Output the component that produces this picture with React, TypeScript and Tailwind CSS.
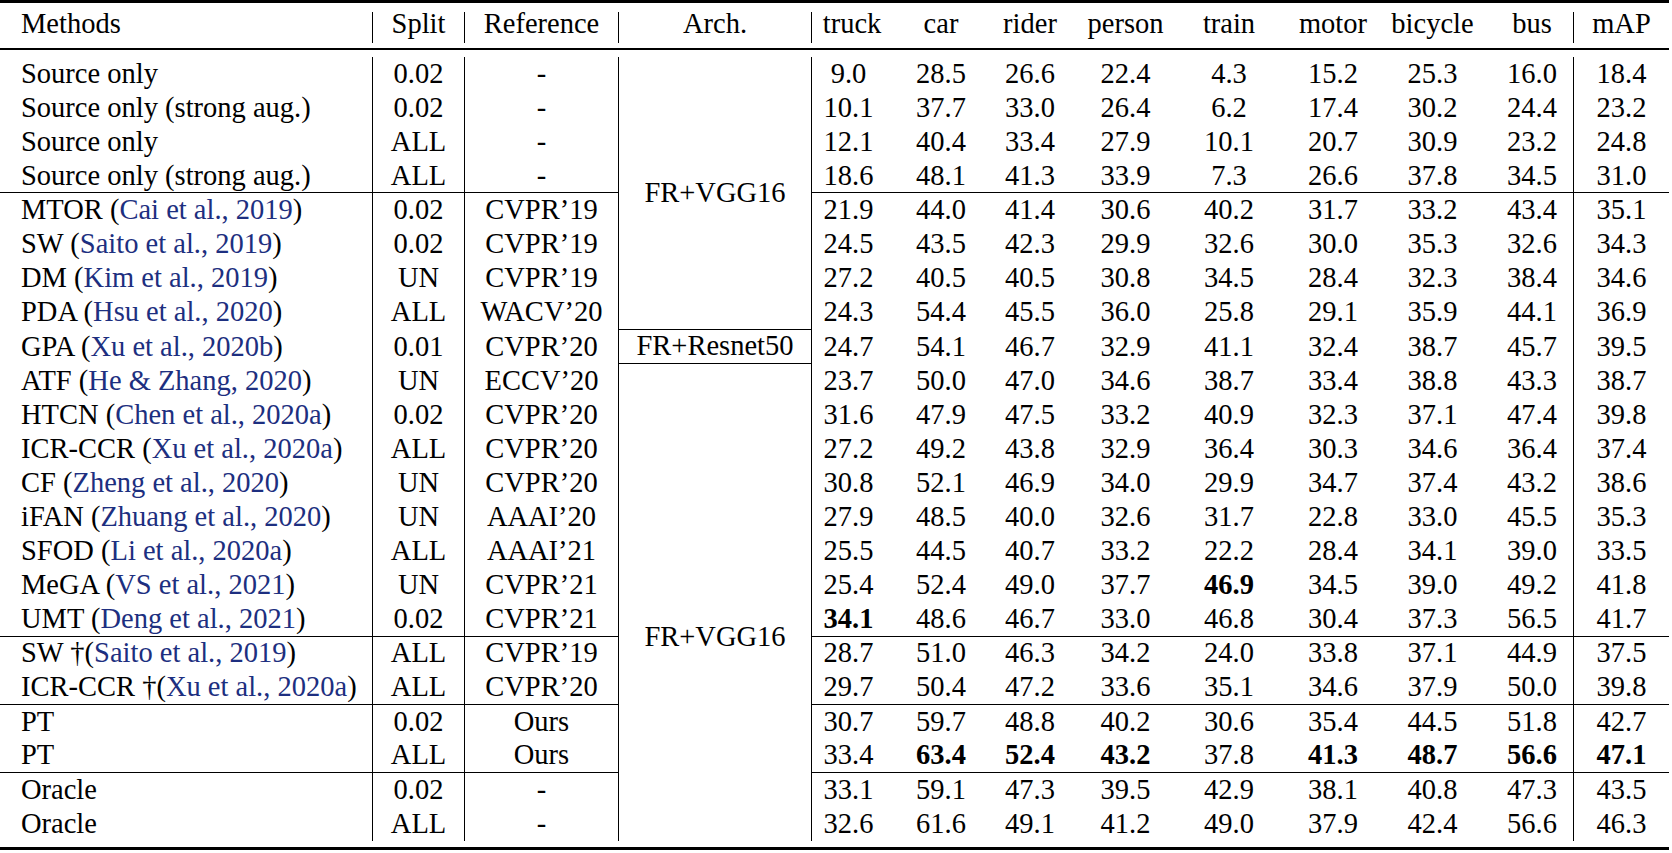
import React from "react";

type Row = {
  name: string;
  cite?: string;
  split: string;
  ref: string;
  vals: string[];
  bold?: number[];
  line?: boolean;
};

const rows: Row[] = [
  { name: "Source only", split: "0.02", ref: "-", vals: ["9.0", "28.5", "26.6", "22.4", "4.3", "15.2", "25.3", "16.0", "18.4"] },
  { name: "Source only (strong aug.)", split: "0.02", ref: "-", vals: ["10.1", "37.7", "33.0", "26.4", "6.2", "17.4", "30.2", "24.4", "23.2"] },
  { name: "Source only", split: "ALL", ref: "-", vals: ["12.1", "40.4", "33.4", "27.9", "10.1", "20.7", "30.9", "23.2", "24.8"] },
  { name: "Source only (strong aug.)", split: "ALL", ref: "-", vals: ["18.6", "48.1", "41.3", "33.9", "7.3", "26.6", "37.8", "34.5", "31.0"], line: true },
  { name: "MTOR (", cite: "Cai et al., 2019", split: "0.02", ref: "CVPR’19", vals: ["21.9", "44.0", "41.4", "30.6", "40.2", "31.7", "33.2", "43.4", "35.1"] },
  { name: "SW (", cite: "Saito et al., 2019", split: "0.02", ref: "CVPR’19", vals: ["24.5", "43.5", "42.3", "29.9", "32.6", "30.0", "35.3", "32.6", "34.3"] },
  { name: "DM (", cite: "Kim et al., 2019", split: "UN", ref: "CVPR’19", vals: ["27.2", "40.5", "40.5", "30.8", "34.5", "28.4", "32.3", "38.4", "34.6"] },
  { name: "PDA (", cite: "Hsu et al., 2020", split: "ALL", ref: "WACV’20", vals: ["24.3", "54.4", "45.5", "36.0", "25.8", "29.1", "35.9", "44.1", "36.9"] },
  { name: "GPA (", cite: "Xu et al., 2020b", split: "0.01", ref: "CVPR’20", vals: ["24.7", "54.1", "46.7", "32.9", "41.1", "32.4", "38.7", "45.7", "39.5"] },
  { name: "ATF (", cite: "He & Zhang, 2020", split: "UN", ref: "ECCV’20", vals: ["23.7", "50.0", "47.0", "34.6", "38.7", "33.4", "38.8", "43.3", "38.7"] },
  { name: "HTCN (", cite: "Chen et al., 2020a", split: "0.02", ref: "CVPR’20", vals: ["31.6", "47.9", "47.5", "33.2", "40.9", "32.3", "37.1", "47.4", "39.8"] },
  { name: "ICR-CCR (", cite: "Xu et al., 2020a", split: "ALL", ref: "CVPR’20", vals: ["27.2", "49.2", "43.8", "32.9", "36.4", "30.3", "34.6", "36.4", "37.4"] },
  { name: "CF (", cite: "Zheng et al., 2020", split: "UN", ref: "CVPR’20", vals: ["30.8", "52.1", "46.9", "34.0", "29.9", "34.7", "37.4", "43.2", "38.6"] },
  { name: "iFAN (", cite: "Zhuang et al., 2020", split: "UN", ref: "AAAI’20", vals: ["27.9", "48.5", "40.0", "32.6", "31.7", "22.8", "33.0", "45.5", "35.3"] },
  { name: "SFOD (", cite: "Li et al., 2020a", split: "ALL", ref: "AAAI’21", vals: ["25.5", "44.5", "40.7", "33.2", "22.2", "28.4", "34.1", "39.0", "33.5"] },
  { name: "MeGA (", cite: "VS et al., 2021", split: "UN", ref: "CVPR’21", vals: ["25.4", "52.4", "49.0", "37.7", "46.9", "34.5", "39.0", "49.2", "41.8"], bold: [4] },
  { name: "UMT (", cite: "Deng et al., 2021", split: "0.02", ref: "CVPR’21", vals: ["34.1", "48.6", "46.7", "33.0", "46.8", "30.4", "37.3", "56.5", "41.7"], bold: [0], line: true },
  { name: "SW †(", cite: "Saito et al., 2019", split: "ALL", ref: "CVPR’19", vals: ["28.7", "51.0", "46.3", "34.2", "24.0", "33.8", "37.1", "44.9", "37.5"] },
  { name: "ICR-CCR †(", cite: "Xu et al., 2020a", split: "ALL", ref: "CVPR’20", vals: ["29.7", "50.4", "47.2", "33.6", "35.1", "34.6", "37.9", "50.0", "39.8"], line: true },
  { name: "PT", split: "0.02", ref: "Ours", vals: ["30.7", "59.7", "48.8", "40.2", "30.6", "35.4", "44.5", "51.8", "42.7"] },
  { name: "PT", split: "ALL", ref: "Ours", vals: ["33.4", "63.4", "52.4", "43.2", "37.8", "41.3", "48.7", "56.6", "47.1"], bold: [1, 2, 3, 5, 6, 7, 8], line: true },
  { name: "Oracle", split: "0.02", ref: "-", vals: ["33.1", "59.1", "47.3", "39.5", "42.9", "38.1", "40.8", "47.3", "43.5"] },
  { name: "Oracle", split: "ALL", ref: "-", vals: ["32.6", "61.6", "49.1", "41.2", "49.0", "37.9", "42.4", "56.6", "46.3"] },
];

const classes = ["truck", "car", "rider", "person", "train", "motor", "bicycle", "bus"];

const cols =
  "grid-cols-[373px_92px_154px_193px_85px_88px_90px_101px_106px_102px_97px_93px_95px]";

// small nudges so value columns sit where the source table had them
function shift(j: number) {
  if (j === 0) return "pr-[12px]";
  if (j === 7) return "pl-[10px]";
  return "";
}

function HeadCell({
  children,
  left,
  rule,
  extra = "",
}: {
  children: React.ReactNode;
  left?: boolean;
  rule?: boolean;
  extra?: string;
}) {
  return (
    <div className="h-[45px] pt-[9px]">
      <div
        className={`flex h-[31px] items-center pb-[7px] ${left ? "pl-[21px]" : "justify-center"} ${
          rule ? "border-r border-black" : ""
        } ${extra}`}
      >
        {children}
      </div>
    </div>
  );
}

export default function App() {
  return (
    <div className="h-[853px] w-[1672px] bg-white font-['Liberation_Serif',serif] text-[28.5px] leading-none text-black">
      <div className="w-[1669px]">
        <div className="h-[3px] bg-black" />
        <div className={`grid ${cols}`}>
          <HeadCell left rule>Methods</HeadCell>
          <HeadCell rule>Split</HeadCell>
          <HeadCell rule>Reference</HeadCell>
          <HeadCell rule>Arch.</HeadCell>
          {classes.map((c, j) => (
            <HeadCell key={c} rule={c === "bus"} extra={j === 0 ? "pr-[5px]" : shift(j)}>
              {c}
            </HeadCell>
          ))}
          <HeadCell>mAP</HeadCell>
        </div>
        <div className="h-[2px] bg-black" />
        <div className="h-[7px]" />

        <div className={`grid ${cols} grid-rows-[repeat(23,34.1px)]`}>
          <div className="col-start-4 row-span-8 row-start-1 flex items-center justify-center border-r border-b border-black">
            FR+VGG16
          </div>
          <div className="col-start-4 row-start-9 flex items-center justify-center border-r border-b border-black">
            FR+Resnet50
          </div>
          <div className="col-start-4 row-span-14 row-start-10 border-r border-black pt-[256px] text-center">
            <div className="flex h-[34px] items-center justify-center">FR+VGG16</div>
          </div>

          {rows.map((r, i) => {
            const b = r.line ? "border-b border-black" : "";
            return (
              <React.Fragment key={i}>
                <div className={`flex items-center whitespace-pre border-r border-black pl-[21px] ${b}`}>
                  <span>{r.name}</span>
                  {r.cite && (
                    <>
                      <span className="text-[#1d2f80]">{r.cite}</span>
                      <span>)</span>
                    </>
                  )}
                </div>
                <div className={`flex items-center justify-center border-r border-black ${b}`}>{r.split}</div>
                <div className={`flex items-center justify-center border-r border-black ${b}`}>{r.ref}</div>
                {r.vals.map((v, j) => (
                  <div
                    key={j}
                    className={`flex items-center justify-center ${b} ${shift(j)} ${
                      j === 7 ? "border-r border-black" : ""
                    } ${r.bold?.includes(j) ? "font-bold" : ""}`}
                  >
                    {v}
                  </div>
                ))}
              </React.Fragment>
            );
          })}
        </div>
        <div className="h-[6px]" />
        <div className="h-[3px] bg-black" />
      </div>
    </div>
  );
}
